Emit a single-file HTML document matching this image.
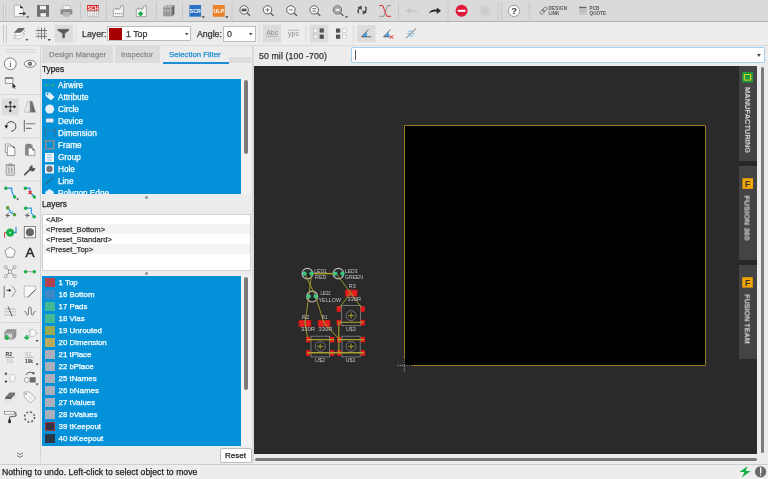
<!DOCTYPE html><html><head><meta charset="utf-8"><style>
*{margin:0;padding:0;box-sizing:border-box}
html,body{width:768px;height:479px;overflow:hidden;background:#ececec;font-family:"Liberation Sans",sans-serif;position:relative}
.a{position:absolute}
.t{position:absolute;white-space:nowrap;color:#222;line-height:1;-webkit-text-stroke:0.25px currentColor}
.blue{background:#0392d9}
svg{position:absolute;overflow:visible}
body>div,body>svg{will-change:transform}
</style></head><body><div class="a" style="left:0;top:0;width:768px;height:21px;background:#dadada"></div>
<div class="a" style="left:0;top:21px;width:768px;height:1px;background:#b4b4b4"></div>
<div class="a" style="left:0;top:22px;width:768px;height:23px;background:#ededed"></div>
<div class="a" style="left:0;top:45px;width:768px;height:1px;background:#dcdcdc"></div>
<div class="a" style="left:0;top:46px;width:40px;height:417px;background:#ececec"></div>
<div class="a" style="left:40px;top:46px;width:1px;height:417px;background:#d4d4d4"></div>
<div class="a" style="left:41px;top:46px;width:211px;height:417px;background:#ececec"></div><div class="a" style="left:252px;top:46px;width:2px;height:417px;background:#dadada"></div><div class="a" style="left:42px;top:45.5px;width:70.5px;height:17.3px;background:#dcdcdc"></div><div class="t" style="left:49px;top:50.6px;color:#8c8c8c;font-size:7.8px">Design Manager</div><div class="a" style="left:115.4px;top:45.5px;width:44.6px;height:17.3px;background:#dcdcdc"></div><div class="t" style="left:121px;top:50.6px;color:#8c8c8c;font-size:7.8px">Inspector</div><div class="t" style="left:169px;top:50.6px;color:#1b8ed4;font-size:7.8px">Selection Filter</div><div class="a" style="left:162.5px;top:62.2px;width:65.5px;height:1.7px;background:#1b8ed4"></div><div class="a" style="left:229px;top:57px;width:22px;height:6px;background:#dddddd"></div><div class="t" style="left:42px;top:65px;font-size:8.3px;color:#222">Types</div><div class="a blue" style="left:42px;top:79px;width:199px;height:115px;overflow:hidden"><div class="t" style="left:16px;top:2.8px;font-size:8.2px;color:#fff">Airwire</div><div class="t" style="left:16px;top:14.8px;font-size:8.2px;color:#fff">Attribute</div><div class="t" style="left:16px;top:26.8px;font-size:8.2px;color:#fff">Circle</div><div class="t" style="left:16px;top:38.8px;font-size:8.2px;color:#fff">Device</div><div class="t" style="left:16px;top:50.8px;font-size:8.2px;color:#fff">Dimension</div><div class="t" style="left:16px;top:62.8px;font-size:8.2px;color:#fff">Frame</div><div class="t" style="left:16px;top:74.8px;font-size:8.2px;color:#fff">Group</div><div class="t" style="left:16px;top:86.8px;font-size:8.2px;color:#fff">Hole</div><div class="t" style="left:16px;top:98.8px;font-size:8.2px;color:#fff">Line</div><div class="t" style="left:16px;top:110.8px;font-size:8.2px;color:#fff">Polygon Edge</div><svg width="199" height="115" style="left:0;top:0"><line x1="3.5" y1="6.3" x2="11.5" y2="6.3" stroke="#4aa860" stroke-width="0.7"/><circle cx="4" cy="6.3" r="1" fill="#3cc45a"/><circle cx="11" cy="6.3" r="1" fill="#3cc45a"/><path d="M3.5 13.5 L8 13.5 L12.5 18 L9 21.5 L3.5 17 Z" fill="#e8eef6"/><circle cx="5.5" cy="15.2" r="0.9" fill="#0392d9"/><circle cx="7.7" cy="30" r="4.5" fill="#e8eef6"/><rect x="4" y="39.5" width="7.5" height="4" rx="0.6" fill="#e8eef6"/><path d="M4.6 39.7 H11 M4.6 43.3 H11" stroke="#7a8a9a" stroke-width="0.6" stroke-dasharray="1 0.9"/><path d="M3.3 49 V58 M12.8 49 V58" stroke="#4a5a72" stroke-width="0.7" fill="none"/><path d="M3.3 51.5 H12.8" stroke="#5a6a80" stroke-width="0.6"/><rect x="3.7" y="61.7" width="8" height="8" fill="none" stroke="#8c8c8c" stroke-width="1.5"/><rect x="3" y="74" width="9" height="9" fill="#f2f5fa"/><path d="M5 76h5M5 78.5h5M5 81h5" stroke="#8cc0e8" stroke-width="1"/><rect x="3" y="85.5" width="9" height="9" fill="#eef0f4"/><circle cx="7.5" cy="90" r="3.2" fill="#6e7580"/><line x1="3.5" y1="105" x2="12" y2="98" stroke="#3b4d63" stroke-width="0.9"/><path d="M7.5 110 L12 113 L10.5 117 L4.5 117 L3 113 Z" fill="#e8eef6"/></svg></div><div class="a" style="left:241px;top:79px;width:10px;height:115px;background:#f2f2f2"></div><div class="a" style="left:244px;top:80px;width:3.5px;height:74px;background:#7b7b7b;border-radius:2px"></div><div class="a" style="left:145px;top:195.5px;width:2.5px;height:2.5px;border-radius:50%;background:#9a9a9a"></div><div class="t" style="left:42px;top:200px;font-size:8.3px;color:#222">Layers</div><div class="a" style="left:42px;top:213.5px;width:208.5px;height:57px;background:#fff;border:1px solid #d2d2d2"></div><div class="a" style="left:43px;top:224px;width:206.5px;height:10px;background:#f3f3f3"></div><div class="a" style="left:43px;top:244px;width:206.5px;height:10px;background:#f3f3f3"></div><div class="t" style="left:45.5px;top:215.5px;font-size:7.6px;color:#333">&lt;All&gt;</div><div class="t" style="left:45.5px;top:225.5px;font-size:7.6px;color:#333">&lt;Preset_Bottom&gt;</div><div class="t" style="left:45.5px;top:235.5px;font-size:7.6px;color:#333">&lt;Preset_Standard&gt;</div><div class="t" style="left:45.5px;top:245.5px;font-size:7.6px;color:#333">&lt;Preset_Top&gt;</div><div class="a" style="left:145px;top:271.5px;width:2.5px;height:2.5px;border-radius:50%;background:#9a9a9a"></div><div class="a blue" style="left:42px;top:276px;width:199px;height:170px;overflow:hidden"><div class="a" style="left:3px;top:1.5px;width:9.5px;height:9px;background:#b4414e;"></div><div class="t" style="left:16.5px;top:2.5px;font-size:7.9px;color:#fff">1 Top</div><div class="a" style="left:3px;top:13.5px;width:9.5px;height:9px;background:#3d89c6;"></div><div class="t" style="left:16.5px;top:14.5px;font-size:7.9px;color:#fff">16 Bottom</div><div class="a" style="left:3px;top:25.5px;width:9.5px;height:9px;background:#44b795;"></div><div class="t" style="left:16.5px;top:26.5px;font-size:7.9px;color:#fff">17 Pads</div><div class="a" style="left:3px;top:37.5px;width:9.5px;height:9px;background:#44b795;"></div><div class="t" style="left:16.5px;top:38.5px;font-size:7.9px;color:#fff">18 Vias</div><div class="a" style="left:3px;top:49.5px;width:9.5px;height:9px;background:#9aab54;"></div><div class="t" style="left:16.5px;top:50.5px;font-size:7.9px;color:#fff">19 Unrouted</div><div class="a" style="left:3px;top:61.5px;width:9.5px;height:9px;background:#b9aa5e;"></div><div class="t" style="left:16.5px;top:62.5px;font-size:7.9px;color:#fff">20 Dimension</div><div class="a" style="left:3px;top:73.5px;width:9.5px;height:9px;background:#aaafb9;"></div><div class="t" style="left:16.5px;top:74.5px;font-size:7.9px;color:#fff">21 tPlace</div><div class="a" style="left:3px;top:85.5px;width:9.5px;height:9px;background:#aaafb9;"></div><div class="t" style="left:16.5px;top:86.5px;font-size:7.9px;color:#fff">22 bPlace</div><div class="a" style="left:3px;top:97.5px;width:9.5px;height:9px;background:#aaafb9;"></div><div class="t" style="left:16.5px;top:98.5px;font-size:7.9px;color:#fff">25 tNames</div><div class="a" style="left:3px;top:109.5px;width:9.5px;height:9px;background:#aaafb9;"></div><div class="t" style="left:16.5px;top:110.5px;font-size:7.9px;color:#fff">26 bNames</div><div class="a" style="left:3px;top:121.5px;width:9.5px;height:9px;background:#aaafb9;"></div><div class="t" style="left:16.5px;top:122.5px;font-size:7.9px;color:#fff">27 tValues</div><div class="a" style="left:3px;top:133.5px;width:9.5px;height:9px;background:#aaafb9;"></div><div class="t" style="left:16.5px;top:134.5px;font-size:7.9px;color:#fff">28 bValues</div><div class="a" style="left:3px;top:145.5px;width:9.5px;height:9px;background:#3a3240;border:1px solid #a33a4a;"></div><div class="t" style="left:16.5px;top:146.5px;font-size:7.9px;color:#fff">39 tKeepout</div><div class="a" style="left:3px;top:157.5px;width:9.5px;height:9px;background:#2c3848;"></div><div class="t" style="left:16.5px;top:158.5px;font-size:7.9px;color:#fff">40 bKeepout</div><div class="a" style="left:3px;top:169.5px;width:9.5px;height:9px;background:#5a3a55;"></div><div class="t" style="left:16.5px;top:170.5px;font-size:7.9px;color:#fff">41 tRestrict</div></div><div class="a" style="left:241px;top:276px;width:10px;height:170px;background:#f2f2f2"></div><div class="a" style="left:244px;top:277px;width:3.5px;height:113px;background:#7b7b7b;border-radius:2px"></div><div class="a" style="left:219.6px;top:448.3px;width:31.6px;height:14.5px;background:#fff;border:1px solid #bdbdbd;border-radius:2px"></div><div class="t" style="left:224.5px;top:451.5px;font-size:8px;color:#222">Reset</div>
<div class="a" style="left:254px;top:46px;width:514px;height:20px;background:#ececec"></div>
<div class="t" style="left:259px;top:51.5px;font-size:8.7px;color:#333;letter-spacing:0.14px">50 mil (100 -700)</div>
<div class="a" style="left:351px;top:47.4px;width:414px;height:16.2px;background:#fff;border:1.5px solid #a2d0ef;border-radius:1px"></div>
<div class="a" style="left:354.6px;top:50px;width:1px;height:9.5px;background:#555"></div>
<svg width="8" height="6" style="left:757.4px;top:54.2px"><path d="M0 0 H3.8 L1.9 2.9Z" fill="#444"/></svg>
<div class="a" style="left:254px;top:66px;width:503px;height:388px;background:#2a2a2a"></div>
<div class="a" style="left:404px;top:125px;width:302px;height:241px;background:#000;border:1px solid #a58422"></div>
<div class="a" style="left:757px;top:66px;width:11px;height:397px;background:#ececec"></div>
<div class="a" style="left:760.8px;top:67px;width:3.4px;height:386px;background:#7b7b7b;border-radius:1.7px"></div>
<div class="a" style="left:254px;top:454px;width:503px;height:9px;background:#ececec"></div>
<div class="a" style="left:255px;top:457.5px;width:502px;height:3px;background:#7b7b7b;border-radius:1.5px"></div>
<div class="a" style="left:0;top:463px;width:768px;height:16px;background:#ededed"></div>
<div class="a" style="left:0;top:464px;width:768px;height:1px;background:#cdcdcd"></div>
<svg width="768" height="479" style="left:0;top:0"><path d="M747.5 466.3 L739.5 471.9 H744.4 L742 477.6 L750.6 471 H745.8 Z" fill="#14b043"/><circle cx="760.6" cy="471.8" r="5.6" fill="#6a6a6a"/><rect x="760" y="467.3" width="1.3" height="6.1" fill="#fff"/><rect x="760" y="474.5" width="1.3" height="1.3" fill="#fff"/></svg>
<div class="t" style="left:1.5px;top:467.5px;font-size:8.6px;color:#222;letter-spacing:0.065px">Nothing to undo. Left-click to select object to move</div>
<div class="t" style="left:81.8px;top:30px;font-size:8.8px;color:#333">Layer:</div>
<div class="a" style="left:107px;top:26.2px;width:84.4px;height:15.4px;background:#fff;border:1px solid #bdbdbd"></div>
<div class="a" style="left:109.4px;top:27.8px;width:12.5px;height:12px;background:#a80000"></div>
<div class="t" style="left:125.7px;top:30.3px;font-size:8.8px;color:#333">1 Top</div>
<svg width="5" height="4" style="left:184.6px;top:33px"><path d="M0 0 H3.4 L1.7 2.6Z" fill="#444"/></svg>
<div class="t" style="left:196.8px;top:30px;font-size:8.8px;color:#333">Angle:</div>
<div class="a" style="left:223.3px;top:26.2px;width:32.8px;height:15.6px;background:#fff;border:1px solid #bdbdbd"></div>
<div class="t" style="left:227px;top:30px;font-size:8.8px;color:#333">0</div>
<svg width="5" height="4" style="left:249.4px;top:33px"><path d="M0 0 H3.4 L1.7 2.6Z" fill="#444"/></svg>
<svg width="768" height="479" style="left:0;top:0"><path d="M3.5 3 V19.5 M6.3 3 V19.5" stroke="#bdbdbd" stroke-width="0.9"/><path d="M4.3 3 V19.5 M7.1 3 V19.5" stroke="#f0f0f0" stroke-width="0.6"/><path d="M80.5 2 V20" stroke="#c6c6c6" stroke-width="0.9"/><path d="M106.5 2 V20" stroke="#c6c6c6" stroke-width="0.9"/><path d="M156.5 2 V20" stroke="#c6c6c6" stroke-width="0.9"/><path d="M182.5 2 V20" stroke="#c6c6c6" stroke-width="0.9"/><path d="M232 2 V20" stroke="#c6c6c6" stroke-width="0.9"/><path d="M398.5 2 V20" stroke="#c6c6c6" stroke-width="0.9"/><path d="M448 2 V20" stroke="#c6c6c6" stroke-width="0.9"/><path d="M498 2 V20" stroke="#c6c6c6" stroke-width="0.9"/><path d="M501.5 2 V20" stroke="#c6c6c6" stroke-width="0.9"/><rect x="528" y="2" width="3" height="18" fill="#d2d2d2"/><path d="M14.3 5.3 H20.5 L23.2 8 V16.6 H14.3 Z" fill="#f7f7f7" stroke="#9a9a9a" stroke-width="0.6"/><path d="M20.2 5.2 L23.4 8.3 L20.2 8.3 Z" fill="#222"/><path d="M19 13.6 H24.6" stroke="#333" stroke-width="1.1"/><path d="M23.3 11.6 L26 13.6 L23.3 15.6Z" fill="#333"/><path d="M26.3 16.2 L29 16.2 L27.65 18.3Z" fill="#444"/><path d="M37 5 H49 V16.8 H37 Z" fill="#707070"/><rect x="40" y="5.8" width="6" height="3.6" fill="#f4f4f4"/><rect x="40.5" y="13.2" width="5.5" height="3.4" fill="#f4f4f4"/><rect x="63" y="5.6" width="7" height="4" rx="0.6" fill="#f5f5f5" stroke="#9a9a9a" stroke-width="0.6"/><rect x="60.5" y="9.3" width="11.8" height="5.2" rx="1" fill="#8c8c8c"/><rect x="63" y="12" width="7" height="4.7" fill="#b8b8b8"/><rect x="87" y="5" width="11.8" height="5.6" fill="#d42626"/><rect x="87" y="11.2" width="11.8" height="5.4" fill="#b9b9b9"/><text x="92.9" y="9.9" font-size="5.2" fill="#fff" text-anchor="middle" font-family="Liberation Sans" font-weight="bold">SCH</text><text x="92.9" y="15.9" font-size="5" fill="#fff" text-anchor="middle" font-family="Liberation Sans" font-weight="bold">BRD</text><path d="M113.3 16.6 V9.5 L115.8 8 V9.5 L118.3 8 V9.5 L120.8 8 V6 L123.3 5.3 V16.6 Z" fill="#f8f8f8" stroke="#777" stroke-width="0.6"/><path d="M136.3 16.6 V9.5 L138.8 8 V9.5 L141.3 8 V9.5 L143.8 8 V6 L146.3 5.3 V16.6 Z" fill="#f8f8f8" stroke="#777" stroke-width="0.6"/><path d="M115 13.7 H123" stroke="#555" stroke-width="0.8" stroke-dasharray="1.3 0.7"/><path d="M140.6 11 L143.4 13.8 L140.6 16.6 L137.8 13.8 Z" fill="#1cb04c"/><path d="M163.3 7.3 H172.3 V16.3 H163.3 Z" fill="#8c8c8c"/><path d="M165.4 7.5 V16.2 M168 7.5 V16.2 M170.4 7.5 V16.2" stroke="#bdbdbd" stroke-width="0.7"/><path d="M163.3 10.6 H172.3" stroke="#d0d0d0" stroke-width="0.6"/><path d="M163.3 7.3 L165.6 5 H174.3 L172.3 7.3 Z" fill="#9a9a9a"/><path d="M165.2 7 L167 5.4 M167.8 7 L169.6 5.4 M170.4 7 L172.2 5.4" stroke="#fafafa" stroke-width="0.9"/><path d="M172.3 7.3 L174.3 5 V14 L172.3 16.3 Z" fill="#555"/><rect x="189.4" y="5" width="11.7" height="11.7" fill="#2a72c6"/><text x="195.25" y="12.9" font-size="5.4" fill="#fff" text-anchor="middle" font-family="Liberation Sans" font-weight="bold">SCR</text><path d="M201.8 16.2 L204.8 16.2 L203.3 18.4Z" fill="#444"/><rect x="212.8" y="5" width="12" height="11.8" fill="#e8832b"/><text x="218.8" y="12.9" font-size="5.4" fill="#fff" text-anchor="middle" font-family="Liberation Sans" font-weight="bold">ULP</text><path d="M225.3 16.2 L228.3 16.2 L226.8 18.4Z" fill="#444"/><circle cx="244.1" cy="9.9" r="4.2" fill="#fafafa" stroke="#5e5e5e" stroke-width="1"/><path d="M247.1 12.9 L250.1 15.9" stroke="#505050" stroke-width="1.3"/><rect x="241.6" y="8.6" width="5" height="2.8" fill="#555"/><circle cx="267.5" cy="9.9" r="4.2" fill="#fafafa" stroke="#5e5e5e" stroke-width="1"/><path d="M270.5 12.9 L273.5 15.9" stroke="#505050" stroke-width="1.3"/><path d="M265.6 9.9 H269.4 M267.5 8 V11.8" stroke="#666" stroke-width="0.9"/><circle cx="290.9" cy="9.9" r="4.2" fill="#fafafa" stroke="#5e5e5e" stroke-width="1"/><path d="M293.9 12.9 L296.9 15.9" stroke="#505050" stroke-width="1.3"/><path d="M289 9.9 H292.8" stroke="#666" stroke-width="0.9"/><circle cx="314.2" cy="9.9" r="4.2" fill="#fafafa" stroke="#5e5e5e" stroke-width="1"/><path d="M317.2 12.9 L320.2 15.9" stroke="#505050" stroke-width="1.3"/><path d="M312.4 8.7 H316 M312.4 11.1 H316" stroke="#4a4a4a" stroke-width="0.85"/><circle cx="337.4" cy="9.9" r="4.2" fill="#fafafa" stroke="#5e5e5e" stroke-width="1"/><path d="M340.4 12.9 L343.4 15.9" stroke="#505050" stroke-width="1.3"/><circle cx="337.4" cy="9.9" r="3.5" fill="#a0a0a0"/><rect x="335.6" y="8.8" width="3.8" height="2.2" fill="#f4f4f4"/><path d="M345 16.3 L348 16.3 L346.5 18.3Z" fill="#444"/><path d="M358.6 13.2 C357.6 11 358 8.6 360.4 7.6" stroke="#4a4a4a" stroke-width="1.5" fill="none"/><path d="M357.6 7.6 L361.6 5.6 L361.9 9.9 Z" fill="#4a4a4a"/><path d="M365.4 6.6 C366.6 8.6 366.4 11.2 364 12.6" stroke="#4a4a4a" stroke-width="1.5" fill="none"/><path d="M367 12.4 L362.8 14.6 L362.5 10.3 Z" fill="#4a4a4a"/><path d="M391 5.6 H387.6 L383.8 16.3 H379.4" stroke="#8a8a8a" stroke-width="0.9" fill="none"/><path d="M379.4 5.6 H382.8 L386.8 16.3 H391.2" stroke="#d42a2a" stroke-width="1" fill="none"/><path d="M417.8 13.8 C417 10 413.5 9 410 9.6 V7.4 L405.9 10.8 L410 14 V11.7 C413 11.3 416 12 417.8 13.8Z" fill="#c6c6c6"/><path d="M429 13.8 C429.8 10 433.3 9 436.8 9.6 V7.4 L441 10.8 L436.8 14 V11.7 C433.8 11.3 430.8 12 429 13.8Z" fill="#2c2c2c"/><circle cx="461.6" cy="10.8" r="6" fill="#e0193a"/><rect x="457.8" y="9.8" width="7.6" height="2" fill="#fff"/><circle cx="485" cy="10.8" r="5.9" fill="#d2d2d2"/><text x="485" y="12.6" font-size="4.6" fill="#c0c0c0" text-anchor="middle" font-family="Liberation Sans" font-weight="bold">GO</text><circle cx="514" cy="10.9" r="5.6" fill="#fbfbfb" stroke="#8a8a8a" stroke-width="0.8"/><text x="514" y="14.2" font-size="9.4" fill="#3a3a3a" text-anchor="middle" font-family="Liberation Sans" font-weight="bold">?</text><g transform="rotate(-45 543.5 10.7)"><rect x="539.2" y="9.2" width="5" height="3" rx="1.5" fill="none" stroke="#666" stroke-width="0.8"/><rect x="542.8" y="9.2" width="5" height="3" rx="1.5" fill="none" stroke="#666" stroke-width="0.8"/></g><text x="548.5" y="10" font-size="4.6" fill="#555" font-family="Liberation Sans" font-weight="bold" textLength="18.5">DESIGN</text><text x="548.5" y="14.6" font-size="4.6" fill="#555" font-family="Liberation Sans" font-weight="bold">LINK</text><rect x="579.3" y="6.9" width="7" height="7.6" fill="#cdcdcd" stroke="#aaa" stroke-width="0.4"/><rect x="579.3" y="6.9" width="7" height="1.3" fill="#666"/><path d="M580.3 10 H585.3 M580.3 11.8 H585.3" stroke="#999" stroke-width="0.6"/><text x="589.6" y="10" font-size="4.6" fill="#555" font-family="Liberation Sans" font-weight="bold">PCB</text><text x="589.6" y="14.6" font-size="4.6" fill="#555" font-family="Liberation Sans" font-weight="bold" textLength="16.5">QUOTE</text><path d="M3.5 25 V43 M6.3 25 V43" stroke="#c4c4c4" stroke-width="0.9"/><path d="M76 25 V43" stroke="#d8d8d8" stroke-width="0.9"/><path d="M259.4 25 V43" stroke="#d8d8d8" stroke-width="0.9"/><path d="M306 25 V43" stroke="#d8d8d8" stroke-width="0.9"/><path d="M353.6 25 V43" stroke="#d8d8d8" stroke-width="0.9"/><path d="M13.7 38.6 L18.3 33.8 H25 L20.4 38.6 Z" fill="#fafafa" stroke="#9a9a9a" stroke-width="0.55"/><path d="M13.7 35.6 L18.3 30.8 H25 L20.4 35.6 Z" fill="#fafafa" stroke="#9a9a9a" stroke-width="0.55"/><path d="M13.7 32.8 L18.3 28 H25.1 L20.5 32.8 Z" fill="#686868"/><path d="M25.5 39 L28.2 39 L26.85 41Z" fill="#444"/><path d="M38.6 27.6 V39" stroke="#b0b0b0" stroke-width="0.8"/><path d="M41.5 27.6 V39 M44.6 27.6 V39 M35.8 30.5 H47 M35.8 36.3 H47" stroke="#5a5a5a" stroke-width="0.8"/><path d="M35.6 33.5 H47.2" stroke="#aaa" stroke-width="0.8"/><path d="M47.7 39 L50.8 39 L49.25 41.2Z" fill="#444"/><rect x="54.7" y="24.7" width="18.2" height="17.7" fill="#dcdcdc"/><path d="M57.8 29.3 H68.8 V30.3 L64.6 33.6 V37.6 Q63.7 38.3 62.7 37.6 V33.6 L57.8 30.3 Z" fill="#5a5a5a" stroke="#5a5a5a" stroke-width="0.6" stroke-linejoin="round"/><rect x="262.6" y="24.7" width="18.4" height="17.7" fill="#dcdcdc"/><text x="266.2" y="35.4" font-size="7" fill="#8a8a8a" font-family="Liberation Sans">Abc</text><path d="M266.2 36.4 H277" stroke="#999" stroke-width="0.6"/><text x="288" y="35.6" font-size="7" fill="#8a8a8a" font-family="Liberation Sans">ypc</text><path d="M288 30.2 H299.3" stroke="#999" stroke-width="0.6"/><rect x="309.7" y="24.7" width="18.7" height="17.7" fill="#dcdcdc"/><rect x="313.4" y="28.4" width="4" height="4" fill="#f0f0f0" stroke="#aaa" stroke-width="0.4"/><rect x="313.4" y="34.6" width="4" height="4" fill="#f0f0f0" stroke="#aaa" stroke-width="0.4"/><rect x="319.6" y="28.4" width="4.2" height="4.2" fill="#505050"/><rect x="319.6" y="34.6" width="4.2" height="4.2" fill="#505050"/><rect x="336" y="28.5" width="4.2" height="4.2" fill="#505050"/><rect x="336" y="34.6" width="4.2" height="4.2" fill="#505050"/><rect x="342.4" y="28.5" width="4" height="4" fill="#f8f8f8" stroke="#aaa" stroke-width="0.4"/><rect x="342.4" y="34.6" width="4" height="4" fill="#f8f8f8" stroke="#aaa" stroke-width="0.4"/><rect x="357.3" y="25" width="18.2" height="17.1" fill="#dcdcdc"/><path d="M362 36.8 L367 32 V36.8 Z" fill="#3fa2e8"/><path d="M361.5 36.8 H371.3 M361.5 36.8 L368.5 29.5" stroke="#333" stroke-width="0.7"/><path d="M384 36.8 L389 32 V36.8 Z" fill="#3fa2e8"/><path d="M383.6 36.8 H390 M383.6 36.8 L390.5 29.5" stroke="#333" stroke-width="0.7"/><path d="M389.8 35.3 L393.3 38.8 M393.3 35.3 L389.8 38.8" stroke="#e22" stroke-width="1"/><path d="M406 38.2 L416 28.6" stroke="#444" stroke-width="0.7"/><path d="M411 30 V32 M411 35.2 V37.2 M407.5 33.6 H409.5 M412.6 33.6 H414.6 M408.5 31 L409.6 32.1 M412.4 35 L413.5 36.1 M413.5 31 L412.4 32.1 M408.5 36.1 L409.6 35" stroke="#3aa0e8" stroke-width="0.8"/><path d="M5 49.5 H36 M5 52 H36" stroke="#d0d0d0" stroke-width="0.7"/><path d="M1 94.5 H40" stroke="#d4d4d4" stroke-width="0.9"/><path d="M1 137.8 H40" stroke="#d4d4d4" stroke-width="0.9"/><path d="M1 181.1 H40" stroke="#d4d4d4" stroke-width="0.9"/><path d="M1 322.5 H40" stroke="#d4d4d4" stroke-width="0.9"/><path d="M1 347.3 H40" stroke="#d4d4d4" stroke-width="0.9"/><circle cx="10.3" cy="63.8" r="5.9" fill="#fbfbfb" stroke="#555" stroke-width="0.7"/><text x="10.3" y="67.2" font-size="8" fill="#333" text-anchor="middle" font-family="Liberation Serif">i</text><ellipse cx="30" cy="63.8" rx="5.8" ry="3.5" fill="#fbfbfb" stroke="#555" stroke-width="0.7"/><circle cx="30" cy="63.8" r="2" fill="#444"/><circle cx="30" cy="63.8" r="0.8" fill="#fff"/><rect x="5.2" y="78" width="7.8" height="5.5" fill="#f4f4f4" stroke="#666" stroke-width="0.6"/><path d="M5.2 78 H13" stroke="#333" stroke-width="0.9"/><path d="M12.4 83 L16.3 86.5 L14.5 86.8 L15.3 88.6 L14.6 88.9 L13.8 87.2 L12.5 88.3 Z" fill="#333"/><rect x="2" y="98.3" width="16.8" height="16.9" fill="#dcdcdc"/><path d="M5.5 106.7 H15 M10.3 102 V111.5" stroke="#333" stroke-width="0.9"/><path d="M10.3 100.8 L12 103.2 H8.6Z M10.3 112.6 L12 110.2 H8.6Z M4.4 106.7 L6.8 105 V108.4Z M16.2 106.7 L13.8 105 V108.4Z" fill="#222"/><defs><linearGradient id="mg" x1="0" x2="1"><stop offset="0" stop-color="#fafafa"/><stop offset="0.45" stop-color="#e0e0e0"/><stop offset="0.55" stop-color="#7a7a7a"/><stop offset="1" stop-color="#555"/></linearGradient></defs><path d="M27.8 101.3 H32.2 L35.5 112.2 H24.4 Z" fill="url(#mg)" stroke="#888" stroke-width="0.4"/><path d="M6.3 126.5 A4.8 4.8 0 1 1 11.3 131.2" stroke="#333" stroke-width="0.9" fill="none"/><path d="M4.4 125.6 L8.2 125.6 L6.3 128.8Z" fill="#222"/><path d="M24.3 120 V131.6" stroke="#555" stroke-width="0.9"/><path d="M25.9 123.8 H35.2 M25.9 128.4 H31.5" stroke="#777" stroke-width="1.1"/><path d="M5.3 144 H9.8 L11 145.2 V152.7 H5.3Z" fill="#fafafa" stroke="#555" stroke-width="0.5"/><path d="M7.3 146 H12.8 L14.9 148.1 V155.6 H7.3Z" fill="#fafafa" stroke="#555" stroke-width="0.6"/><path d="M12.8 146 L14.9 148.1 H12.8Z" fill="#333"/><rect x="25" y="144.5" width="7.5" height="11" rx="0.5" fill="#8a8a8a"/><rect x="26.6" y="143.8" width="4.2" height="1.8" fill="#777"/><path d="M28.2 148 H32.5 L34.8 150.2 V155.7 H28.2Z" fill="#fafafa" stroke="#555" stroke-width="0.5"/><path d="M32.5 148 L34.8 150.2 H32.5Z" fill="#333"/><rect x="6.2" y="165.6" width="8.3" height="9.7" rx="0.6" fill="#dcdcdc" stroke="#777" stroke-width="0.6"/><path d="M5.6 165 H15 M8.8 164 H11.8" stroke="#777" stroke-width="0.9"/><path d="M8.8 167.5 V173.5 M11.8 167.5 V173.5" stroke="#888" stroke-width="0.8"/><path d="M24.8 174.6 L31 168.4" stroke="#555" stroke-width="1.8" stroke-linecap="round"/><path d="M30 166.5 A3 3 0 1 0 35.2 167.8 L33.5 168.2 L32.2 166.9 L32.7 165.2 A3 3 0 0 0 30 166.5Z" fill="#555"/><path d="M5.8 188.2 H11.8 V191.5 L14.6 197" stroke="#2f8fe0" stroke-width="1.2" fill="none"/><circle cx="5.8" cy="188.2" r="1.7" fill="#1cb04c"/><circle cx="14.6" cy="197" r="1.7" fill="#1cb04c"/><path d="M16.2 198.6 L19 198.6 L17.6 200.6Z" fill="#444"/><path d="M25.4 188.2 H30 V192 L34.3 197" stroke="#2f8fe0" stroke-width="1.2" fill="none"/><circle cx="25.4" cy="188.2" r="1.7" fill="#1cb04c"/><circle cx="34.3" cy="197" r="1.7" fill="#1cb04c"/><path d="M28.6 190.8 L31.6 194 M31.6 190.8 L28.6 194" stroke="#e22" stroke-width="1.1"/><path d="M8.6 208.9 L10 210.3 L9.2 211.1 L11.8 213.6 L12.6 212.8 L13.6 213.8" stroke="#36a0f0" stroke-width="1.1" fill="none"/><path d="M9.6 211.6 L11.2 210 M10.9 213 L12.5 211.4" stroke="#36a0f0" stroke-width="0.9"/><circle cx="7.65" cy="207.9" r="1.8" fill="#5e9e3a"/><circle cx="14.5" cy="214.75" r="1.8" fill="#5e9e3a"/><path d="M9.7 212.3 L4.9 215.7 H7.7 L5.7 218.3 L10.4 214.9 H7.7 Z" fill="#555"/><path d="M25.7 208.2 H31.4 V213.1 L34.15 216.7" stroke="#36a0f0" stroke-width="1.2" fill="none"/><circle cx="25.7" cy="208.2" r="1.8" fill="#1cb04c"/><circle cx="34.15" cy="216.7" r="1.8" fill="#1cb04c"/><path d="M29.4 212.3 L24.6 215.7 H27.4 L25.4 218.3 L30.1 214.9 H27.4 Z" fill="#555"/><path d="M4.5 237.8 V232.5 H6.5" stroke="#d23a3a" stroke-width="0.9" fill="none"/><path d="M16 227 V232.6 H14" stroke="#2f8fe0" stroke-width="1.2" fill="none"/><circle cx="10.15" cy="232.6" r="4.2" fill="#1cb04c"/><circle cx="10.15" cy="232.6" r="0.9" fill="#cfe"/><rect x="24.2" y="226.5" width="11.4" height="11.4" fill="#f6f6f6" stroke="#444" stroke-width="0.6"/><circle cx="29.9" cy="232.2" r="4" fill="#666"/><path d="M10.1 247 L15.3 250.8 L13.3 257.2 H6.9 L4.9 250.8 Z" fill="#fbfbfb" stroke="#555" stroke-width="0.6"/><text x="30.1" y="257.3" font-size="13.5" fill="#2a2a2a" stroke="#2a2a2a" stroke-width="0.5" text-anchor="middle" font-family="Liberation Sans">A</text><path d="M6 267.5 L14.3 275.8 M14.3 267.5 L6 275.8" stroke="#666" stroke-width="0.6"/><rect x="8.6" y="270.1" width="3.1" height="3.1" fill="#f8f8f8" stroke="#555" stroke-width="0.5"/><circle cx="5.7" cy="267.1" r="1.5" fill="#fafafa" stroke="#555" stroke-width="0.5"/><circle cx="14.6" cy="267.1" r="1.5" fill="#fafafa" stroke="#555" stroke-width="0.5"/><circle cx="5.7" cy="276.3" r="1.5" fill="#fafafa" stroke="#555" stroke-width="0.5"/><circle cx="14.6" cy="276.3" r="1.5" fill="#fafafa" stroke="#555" stroke-width="0.5"/><path d="M25.6 271.7 H34.3" stroke="#999" stroke-width="0.9"/><circle cx="25.6" cy="271.7" r="1.8" fill="#1cb04c"/><circle cx="34.3" cy="271.7" r="1.8" fill="#1cb04c"/><path d="M4.2 285.8 V297.6" stroke="#444" stroke-width="0.7"/><path d="M6.3 290.3 H9.3" stroke="#333" stroke-width="0.8"/><path d="M11.3 290.3 L8.9 288.7 V291.9Z" fill="#222"/><path d="M11.7 285.8 L16 290.3 L11.7 297.1" stroke="#555" stroke-width="0.6" fill="none"/><path d="M24.2 286 H35.6 V289.5 L28.2 297 H24.2 Z" fill="#f8f8f8" stroke="#888" stroke-width="0.5"/><path d="M35.6 289.5 L28.2 297" stroke="#333" stroke-width="0.8"/><path d="M4.2 309 H16 M4.2 311.8 H16 M4.2 315 H16" stroke="#aaa" stroke-width="0.7"/><path d="M8 306.6 L12.2 316.4" stroke="#333" stroke-width="0.8"/><path d="M24.4 311.5 C25.5 310.5 26.2 313 26.6 314 C27 315.5 28 315.5 28.4 314 L28.6 309 C28.8 306.3 31 306.3 31.2 309 L31.4 314 C31.8 315.5 33 315.5 33.3 314 C33.7 312.8 34.4 310.8 35.6 311.5" stroke="#555" stroke-width="0.8" fill="none"/><path d="M4.5 332 L7.3 329.2 H16.3 V336.8 L13.5 339.5 H4.5Z" fill="#8d8d8d"/><path d="M4.5 332 H13.5 V339.5 M13.5 332 L16.3 329.2" stroke="#ccc" stroke-width="0.4" fill="none"/><rect x="6" y="333.5" width="6" height="5" fill="#d8d8d8"/><path d="M4.6 337.6 H9.6 M7.1 335.1 V340.1" stroke="#1cb04c" stroke-width="1.6"/><path d="M30 329.5 H32.5 C35 329.5 36 331.5 36 333 C36 334.5 35 336.5 32.5 336.5 H30Z" fill="#f8f8f8" stroke="#999" stroke-width="0.5"/><path d="M36 333 H37.5 M28 331 H30 M28 335 H30" stroke="#999" stroke-width="0.5"/><path d="M24.2 337.6 H29.2 M26.7 335.1 V340.1" stroke="#1cb04c" stroke-width="1.6"/><path d="M35.6 340 L38.6 340 L37.1 342Z" fill="#444"/><text x="5.6" y="356.4" font-size="5" fill="#333" font-family="Liberation Sans" font-weight="bold">R2</text><path d="M5.6 357.3 H14" stroke="#444" stroke-width="0.5"/><text x="6" y="362.5" font-size="4.6" fill="#bbb" font-family="Liberation Sans">10k</text><text x="25" y="356.4" font-size="5" fill="#bbb" font-family="Liberation Sans">R2</text><path d="M25 357.3 H33.4" stroke="#777" stroke-width="0.5"/><text x="25" y="362.5" font-size="4.8" fill="#333" font-family="Liberation Sans" font-weight="bold">10k</text><path d="M35.6 363.6 L38.6 363.6 L37.1 365.6Z" fill="#444"/><path d="M10 374.5 H12 C14.5 374.5 15.5 376.5 15.5 378 C15.5 379.5 14.5 381.5 12 381.5 H10Z" fill="#f8f8f8" stroke="#aaa" stroke-width="0.5"/><path d="M15.5 378 H16.5" stroke="#aaa" stroke-width="0.5"/><path d="M5.9 372.3 L4.3 374.3 H7.5Z M5.9 383 L4.3 381 H7.5Z" fill="#333"/><path d="M5.9 374 V375.5 M5.9 380 V381.5" stroke="#333" stroke-width="0.6"/><path d="M26 375 C27 372 31 371.5 33 373.5" stroke="#333" stroke-width="0.8" fill="none"/><path d="M34 374.8 L32 372.5 L34.5 372.3Z" fill="#222"/><circle cx="26.8" cy="380" r="2.5" fill="#fafafa" stroke="#555" stroke-width="0.5"/><rect x="29.8" y="377.2" width="5.8" height="5.3" fill="#6a6a6a"/><path d="M35.6 383.4 L38.6 383.4 L37.1 385.4Z" fill="#444"/><path d="M5.3 397 L9.5 392.4 H15 L10.8 397 Z" fill="#777"/><path d="M5.3 397 L10.8 397 L15 392.4 V394.5 L10.8 399 H5.3Z" fill="#5e5e5e"/><path d="M5.8 399 V402.4 M10.3 399 V402 M14.6 395 V398.5" stroke="#bbb" stroke-width="0.5"/><path d="M24.2 392 H29.5 L35.5 398 L30.5 403 L24.2 396.8Z" fill="#fafafa" stroke="#666" stroke-width="0.5"/><circle cx="26.2" cy="394" r="0.8" fill="#666"/><path d="M28.5 396.5 L31.8 399.8 M29.8 395.4 L33 398.6" stroke="#aaa" stroke-width="0.5"/><rect x="4.5" y="411.5" width="10" height="2.6" fill="#fafafa" stroke="#555" stroke-width="0.5"/><path d="M14.5 412.8 H16 V416 L9.5 417 V420" stroke="#333" stroke-width="0.8" fill="none"/><rect x="8.3" y="419.5" width="2.5" height="3.6" fill="#222"/><circle cx="29.6" cy="417" r="5" fill="none" stroke="#555" stroke-width="1.4" stroke-dasharray="2 1.93"/><path d="M17.1 452.8 L20 454.6 L22.9 452.8 M17.1 455.6 L20 457.4 L22.9 455.6" stroke="#555" stroke-width="0.8" fill="none"/></svg>
<svg width="503" height="388" style="left:254px;top:66px;overflow:hidden"><g transform="translate(-254,-66)"><rect x="404" y="125" width="302" height="241" fill="#000"/><path d="M404.5 359 V125.5 H705.5 V365.5 H411" stroke="#9a7b1f" stroke-width="1" fill="none"/><path d="M397.8 365.4 H409.8 M404.3 359.7 V371.7" stroke="#d8d8d8" stroke-width="0.8" stroke-dasharray="1 1.2"/><circle cx="307.4" cy="273.6" r="5.3" fill="none" stroke="#bdbdbd" stroke-width="1.2"/><circle cx="338.4" cy="273.6" r="5.3" fill="none" stroke="#bdbdbd" stroke-width="1.2"/><circle cx="312.2" cy="296.6" r="5.4" fill="none" stroke="#bdbdbd" stroke-width="1.2"/><rect x="341.7" y="305.4" width="18.80000000000001" height="20.30000000000001" fill="none" stroke="#8a8a8a" stroke-width="0.8"/><rect x="311" y="336.2" width="18.600000000000023" height="20.69999999999999" fill="none" stroke="#8a8a8a" stroke-width="0.8"/><rect x="342" y="336.2" width="18.19999999999999" height="20.69999999999999" fill="none" stroke="#8a8a8a" stroke-width="0.8"/><circle cx="351.1" cy="315.6" r="5" fill="none" stroke="#8a8a8a" stroke-width="0.7"/><path d="M348.1 315.6 H354.1 M351.1 312.6 V318.6" stroke="#a9a12a" stroke-width="0.9"/><circle cx="320.2" cy="346.4" r="5" fill="none" stroke="#8a8a8a" stroke-width="0.7"/><path d="M317.2 346.4 H323.2 M320.2 343.4 V349.4" stroke="#a9a12a" stroke-width="0.9"/><circle cx="351.1" cy="346.4" r="5" fill="none" stroke="#8a8a8a" stroke-width="0.7"/><path d="M348.1 346.4 H354.1 M351.1 343.4 V349.4" stroke="#a9a12a" stroke-width="0.9"/><rect x="298.5" y="320" width="12.8" height="6.8" fill="#b01414"/><rect x="299.5" y="320.4" width="4.8" height="6" fill="#e52020"/><rect x="305.5" y="320.4" width="4.8" height="6" fill="#e52020"/><path d="M304.8 320 V326.5" stroke="#7a8a30" stroke-width="1" stroke-dasharray="1 0.8"/><rect x="317.7" y="320" width="12.8" height="6.8" fill="#b01414"/><rect x="318.7" y="320.4" width="4.8" height="6" fill="#e52020"/><rect x="324.7" y="320.4" width="4.8" height="6" fill="#e52020"/><path d="M324.0 320 V326.5" stroke="#7a8a30" stroke-width="1" stroke-dasharray="1 0.8"/><rect x="344.9" y="289.7" width="12.8" height="6.8" fill="#b01414"/><rect x="345.9" y="290.09999999999997" width="4.8" height="6" fill="#e52020"/><rect x="351.9" y="290.09999999999997" width="4.8" height="6" fill="#e52020"/><path d="M351.2 289.7 V296.2" stroke="#7a8a30" stroke-width="1" stroke-dasharray="1 0.8"/><rect x="336.6" y="306.2" width="4.3" height="5.6" fill="#e01a1a"/><rect x="336.6" y="319.8" width="4.3" height="5.6" fill="#e01a1a"/><rect x="360.5" y="306.2" width="4.3" height="5.6" fill="#e01a1a"/><rect x="360.5" y="319.8" width="4.3" height="5.6" fill="#e01a1a"/><rect x="306" y="336.8" width="4.3" height="5.6" fill="#e01a1a"/><rect x="306" y="350.2" width="4.3" height="5.6" fill="#e01a1a"/><rect x="330" y="336.8" width="4.3" height="5.6" fill="#e01a1a"/><rect x="330" y="350.2" width="4.3" height="5.6" fill="#e01a1a"/><rect x="337" y="336.8" width="4.3" height="5.6" fill="#e01a1a"/><rect x="337" y="350.2" width="4.3" height="5.6" fill="#e01a1a"/><rect x="360.8" y="336.8" width="4.3" height="5.6" fill="#e01a1a"/><rect x="360.8" y="350.2" width="4.3" height="5.6" fill="#e01a1a"/><path d="M311.5 273.6 H335.3" stroke="#a9a12a" stroke-width="1.5" fill="none"/><path d="M304.8 273.6 L315.6 296.3 L324 323" stroke="#a9a12a" stroke-width="0.9" fill="none"/><path d="M311.5 273.6 L308.8 296.3 L305 323" stroke="#a9a12a" stroke-width="0.9" fill="none"/><path d="M336.5 274 L350.6 293" stroke="#a9a12a" stroke-width="0.9" fill="none"/><path d="M350.6 293 L339.5 307.5" stroke="#a9a12a" stroke-width="0.9" fill="none"/><path d="M350.6 293 L361.5 307.5" stroke="#a9a12a" stroke-width="0.9" fill="none"/><path d="M338.6 322.3 H363.2" stroke="#a9a12a" stroke-width="1.1" fill="none"/><path d="M338.8 322 V353" stroke="#a9a12a" stroke-width="1.1" fill="none"/><path d="M307.3 339.6 H334 M338 339.6 H363.8" stroke="#a9a12a" stroke-width="1.2" fill="none"/><path d="M307.3 352.8 H363.8" stroke="#a9a12a" stroke-width="1.5" fill="none"/><path d="M305 323 L307.6 338" stroke="#a9a12a" stroke-width="0.9" fill="none"/><path d="M324 323 L338 338" stroke="#a9a12a" stroke-width="0.9" fill="none"/><circle cx="304.6" cy="273.6" r="2.1" fill="#2fcf8c"/><circle cx="304.6" cy="273.6" r="0.7" fill="#8a9a30"/><circle cx="311.5" cy="273.6" r="2.1" fill="#2fcf8c"/><circle cx="311.5" cy="273.6" r="0.7" fill="#8a9a30"/><circle cx="335.3" cy="273.6" r="2.1" fill="#2fcf8c"/><circle cx="335.3" cy="273.6" r="0.7" fill="#8a9a30"/><circle cx="342.5" cy="273.6" r="2.1" fill="#2fcf8c"/><circle cx="342.5" cy="273.6" r="0.7" fill="#8a9a30"/><circle cx="308.8" cy="296.3" r="2.1" fill="#2fcf8c"/><circle cx="308.8" cy="296.3" r="0.7" fill="#8a9a30"/><circle cx="315.6" cy="296.3" r="2.1" fill="#2fcf8c"/><circle cx="315.6" cy="296.3" r="0.7" fill="#8a9a30"/><text x="314.3" y="272.8" font-size="5.2" fill="#c4c4c4" font-family="Liberation Sans" textLength="12.5" lengthAdjust="spacingAndGlyphs">LED1</text><text x="315" y="278.8" font-size="5.2" fill="#c4c4c4" font-family="Liberation Sans" textLength="11.5" lengthAdjust="spacingAndGlyphs">RED</text><text x="345" y="272.8" font-size="5.2" fill="#c4c4c4" font-family="Liberation Sans" textLength="12.5" lengthAdjust="spacingAndGlyphs">LED3</text><text x="345" y="278.8" font-size="5.2" fill="#c4c4c4" font-family="Liberation Sans" textLength="17.8" lengthAdjust="spacingAndGlyphs">GREEN</text><text x="320.6" y="295.2" font-size="5.2" fill="#c4c4c4" font-family="Liberation Sans" textLength="10" lengthAdjust="spacingAndGlyphs">LED2</text><text x="318.5" y="302.2" font-size="5.2" fill="#c4c4c4" font-family="Liberation Sans" textLength="22.5" lengthAdjust="spacingAndGlyphs">YELLOW</text><text x="301.8" y="319" font-size="5.2" fill="#c4c4c4" font-family="Liberation Sans" textLength="7.5" lengthAdjust="spacingAndGlyphs">R2</text><text x="301" y="331.2" font-size="5.2" fill="#c4c4c4" font-family="Liberation Sans" textLength="14" lengthAdjust="spacingAndGlyphs">330R</text><text x="321.8" y="319" font-size="5.2" fill="#c4c4c4" font-family="Liberation Sans" textLength="5.6" lengthAdjust="spacingAndGlyphs">R1</text><text x="318.5" y="331.2" font-size="5.2" fill="#c4c4c4" font-family="Liberation Sans" textLength="14" lengthAdjust="spacingAndGlyphs">330R</text><text x="348.8" y="288.4" font-size="5.2" fill="#c4c4c4" font-family="Liberation Sans" textLength="7" lengthAdjust="spacingAndGlyphs">R3</text><text x="347.5" y="301.2" font-size="5.2" fill="#c4c4c4" font-family="Liberation Sans" textLength="13.5" lengthAdjust="spacingAndGlyphs">330R</text><text x="346" y="331.2" font-size="5.2" fill="#c4c4c4" font-family="Liberation Sans" textLength="9.8" lengthAdjust="spacingAndGlyphs">U$3</text><text x="315" y="362.2" font-size="5.2" fill="#c4c4c4" font-family="Liberation Sans" textLength="10" lengthAdjust="spacingAndGlyphs">U$2</text><text x="345.6" y="362.2" font-size="5.2" fill="#c4c4c4" font-family="Liberation Sans" textLength="10" lengthAdjust="spacingAndGlyphs">U$1</text></g></svg>
<div class="a" style="left:739px;top:66px;width:18px;height:94.7px;background:#444"></div>
<div class="a" style="left:739px;top:160.7px;width:18px;height:5px;background:#282828"></div>
<div class="a" style="left:739px;top:165.7px;width:18px;height:94.3px;background:#444"></div>
<div class="a" style="left:739px;top:260px;width:18px;height:4.6px;background:#282828"></div>
<div class="a" style="left:739px;top:264.6px;width:18px;height:94.1px;background:#444"></div>
<svg width="20" height="300" style="left:738px;top:60px"><rect x="4.1" y="12" width="10.9" height="10.5" fill="#1e9a3c"/><rect x="6.6" y="14.5" width="5.9" height="5.6" fill="none" stroke="#d8d020" stroke-width="1"/><path d="M6 16 H5 M6 18.5 H5 M13 16 H14 M13 18.5 H14" stroke="#d8d020" stroke-width="0.7"/><rect x="4.4" y="118.2" width="10.6" height="10.7" fill="#f0a500"/><text x="9.7" y="126.8" font-size="8.6" fill="#333" text-anchor="middle" font-family="Liberation Sans" font-weight="bold">F</text><rect x="4.2" y="217.2" width="10.6" height="10.4" fill="#f0a500"/><text x="9.5" y="225.7" font-size="8.6" fill="#333" text-anchor="middle" font-family="Liberation Sans" font-weight="bold">F</text></svg>
<div class="t" style="left:714.6999999999999px;top:116.1px;width:66.19999999999999px;height:8px;font-size:7.4px;font-weight:bold;color:#dedede;transform:rotate(90deg);text-align:center;line-height:8px"><svg width="66.19999999999999" height="8" style="position:absolute;left:0;top:0"><text x="0" y="6.9" font-size="7.6" font-weight="bold" fill="#dcdcdc" font-family="Liberation Sans" textLength="66.19999999999999" lengthAdjust="spacingAndGlyphs">MANUFACTURING</text></svg></div>
<div class="t" style="left:725.0px;top:213.5px;width:45px;height:8px;font-size:7.4px;font-weight:bold;color:#dedede;transform:rotate(90deg);text-align:center;line-height:8px"><svg width="45" height="8" style="position:absolute;left:0;top:0"><text x="0" y="6.9" font-size="7.6" font-weight="bold" fill="#dcdcdc" font-family="Liberation Sans" textLength="45" lengthAdjust="spacingAndGlyphs">FUSION 360</text></svg></div>
<div class="t" style="left:722.8px;top:315.1px;width:49.400000000000034px;height:8px;font-size:7.4px;font-weight:bold;color:#dedede;transform:rotate(90deg);text-align:center;line-height:8px"><svg width="49.400000000000034" height="8" style="position:absolute;left:0;top:0"><text x="0" y="6.9" font-size="7.6" font-weight="bold" fill="#dcdcdc" font-family="Liberation Sans" textLength="49.400000000000034" lengthAdjust="spacingAndGlyphs">FUSION TEAM</text></svg></div></body></html>
